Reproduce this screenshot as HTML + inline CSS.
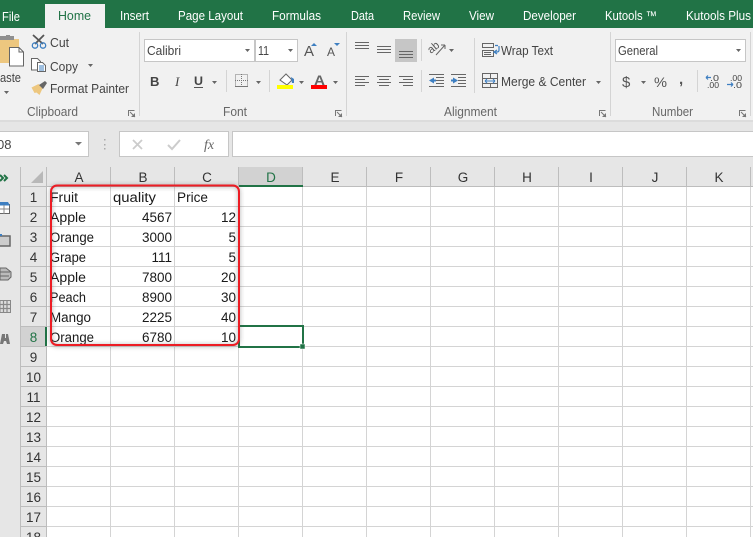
<!DOCTYPE html>
<html><head><meta charset="utf-8"><style>
html,body{margin:0;padding:0;width:753px;height:537px;overflow:hidden;background:#fff}
svg{display:block}
text{font-family:"Liberation Sans",sans-serif;font-size:12.500px;fill:#444}
.w text{fill:#fff}
.c text{font-size:13.500px;fill:#1a1a1a}
.r text{font-size:13.500px;fill:#333;text-anchor:middle}
</style></head><body>
<svg width="753" height="537" viewBox="0 0 753 537" xmlns="http://www.w3.org/2000/svg">
<defs><filter id="sh" x="-10%" y="-10%" width="120%" height="120%"><feGaussianBlur stdDeviation="2"/></filter></defs>
<!-- title tabs -->
<rect width="753" height="28" fill="#217346"/>
<rect x="45" y="4" width="60" height="24" fill="#f1f1f1"/>
<g class="w">
<text x="2" y="21" textLength="18" lengthAdjust="spacingAndGlyphs">File</text>
<text x="120" y="20" textLength="29" lengthAdjust="spacingAndGlyphs">Insert</text>
<text x="178" y="20" textLength="65" lengthAdjust="spacingAndGlyphs">Page Layout</text>
<text x="272" y="20" textLength="49" lengthAdjust="spacingAndGlyphs">Formulas</text>
<text x="351" y="20" textLength="23" lengthAdjust="spacingAndGlyphs">Data</text>
<text x="403" y="20" textLength="37" lengthAdjust="spacingAndGlyphs">Review</text>
<text x="469" y="20" textLength="25" lengthAdjust="spacingAndGlyphs">View</text>
<text x="523" y="20" textLength="53" lengthAdjust="spacingAndGlyphs">Developer</text>
<text x="605" y="20" textLength="52" lengthAdjust="spacingAndGlyphs">Kutools ™</text>
<text x="686" y="20" textLength="65" lengthAdjust="spacingAndGlyphs">Kutools Plus</text>
</g>
<text x="58" y="20" textLength="33" lengthAdjust="spacingAndGlyphs" style="fill:#217346">Home</text>
<!-- ribbon -->
<rect y="28" width="753" height="92" fill="#f1f1f1"/>
<rect y="120" width="753" height="2" fill="#dcdcdc"/>
<rect y="122" width="753" height="45" fill="#e6e6e6"/>
<g fill="#d4d4d4">
<rect x="139" y="32" width="1" height="84"/><rect x="346" y="32" width="1" height="84"/><rect x="610" y="32" width="1" height="84"/><rect x="750" y="32" width="1" height="84"/>
<rect x="226" y="70" width="1" height="22"/><rect x="269" y="70" width="1" height="22"/>
<rect x="421" y="39" width="1" height="22"/><rect x="421" y="70" width="1" height="22"/><rect x="474" y="38" width="1" height="55"/>
<rect x="697" y="70" width="1" height="22"/>
</g>
<!-- clipboard -->
<path d="M0 39h19v24H0z" fill="#edc77f"/><path d="M0 36h6v-1h4v1h4v4H0z" fill="#8f8f8f"/>
<path d="M9.500 47.500h9.500l4.500 4.500v14H9.500z" fill="#fff" stroke="#666"/><path d="M19 47.500v4.500h4.500" fill="none" stroke="#666"/>
<text x="0" y="82" textLength="21" lengthAdjust="spacingAndGlyphs">aste</text>
<path d="M4 91h5l-2.500 3z" fill="#666"/>
<path d="M33 35l10 9M44 35l-9 9" stroke="#555" stroke-width="1.800" fill="none"/>
<circle cx="35" cy="45.500" r="2.700" fill="none" stroke="#3e7fc1" stroke-width="1.300"/><circle cx="43" cy="45.500" r="2.700" fill="none" stroke="#3e7fc1" stroke-width="1.300"/>
<text x="50" y="47" textLength="19" lengthAdjust="spacingAndGlyphs">Cut</text>
<path d="M31.500 58.500h6l3 3v8.500h-9z" fill="#fff" stroke="#666"/><path d="M37.500 62.500h5l3 3v6h-8z" fill="#fff" stroke="#666"/>
<path d="M39 66h5M39 68h5M39 70h5" stroke="#3e7fc1"/>
<text x="50" y="71" textLength="28" lengthAdjust="spacingAndGlyphs">Copy</text>
<path d="M88 64h5l-2.500 3z" fill="#666"/>
<path d="M31.500 87.500l7-3.500 4 4.500-3 6.500-3-2.500-2 .5z" fill="#edc77f"/><path d="M39 85l6-4 2 2-4 6z" fill="#666"/>
<text x="50" y="93" textLength="79" lengthAdjust="spacingAndGlyphs">Format Painter</text>
<text x="27" y="116" textLength="51" lengthAdjust="spacingAndGlyphs" style="fill:#666">Clipboard</text>
<g fill="none" stroke="#777"><path d="M128.500 116v-5.500h6M130 112l5 5"/></g><path d="M135 113v4h-4z" fill="#777"/>
<!-- font -->
<rect x="144.500" y="39.500" width="110" height="22" fill="#fff" stroke="#c6c6c6"/>
<rect x="255.500" y="39.500" width="42" height="22" fill="#fff" stroke="#c6c6c6"/>
<text x="147" y="55" textLength="34" lengthAdjust="spacingAndGlyphs">Calibri</text>
<text x="258" y="55" textLength="11" lengthAdjust="spacingAndGlyphs">11</text>
<path d="M245 49h5l-2.500 3zM288 49h5l-2.500 3z" fill="#666"/>
<text x="304" y="56" style="font-size:15px;fill:#555" textLength="10" lengthAdjust="spacingAndGlyphs">A</text>
<text x="327" y="56" style="font-size:12px;fill:#555" textLength="8" lengthAdjust="spacingAndGlyphs">A</text>
<path d="M311 46l3-3 3 3z" fill="#3e7fc1"/><path d="M334 43h6l-3 3z" fill="#3e7fc1"/>
<text x="150" y="86" style="font-weight:bold;font-size:13px">B</text>
<text x="175" y="86" style="font-style:italic;font-size:13px;font-family:'Liberation Serif',serif">I</text>
<text x="194" y="85" style="font-weight:bold;font-size:12px" textLength="9" lengthAdjust="spacingAndGlyphs">U</text>
<rect x="194" y="87" width="9" height="1" fill="#555"/>
<path d="M212 81h5l-2.500 3zM256 81h5l-2.500 3zM299 81h5l-2.500 3zM333 81h5l-2.500 3z" fill="#666"/>
<g fill="none" stroke="#777" stroke-dasharray="1 1"><rect x="235.500" y="74.500" width="12" height="12"/><path d="M241.500 74v12M235 80.500h13"/></g>
<path d="M235 86.500h13" stroke="#777"/>
<path d="M280 80l6-6 6 6-5 5z" fill="#fff" stroke="#666"/><path d="M291 77l3 2v4h-2z" fill="#3e7fc1"/>
<rect x="277" y="85" width="16" height="4" fill="#ffff00"/>
<text x="314" y="85" style="font-size:14px;font-weight:bold;fill:#666" textLength="11" lengthAdjust="spacingAndGlyphs">A</text>
<rect x="311" y="85" width="16" height="4" fill="#f00"/>
<text x="223" y="116" textLength="24" lengthAdjust="spacingAndGlyphs" style="fill:#666">Font</text>
<g fill="none" stroke="#777"><path d="M335.500 116v-5.500h6M337 112l5 5"/></g><path d="M342 113v4h-4z" fill="#777"/>
<!-- alignment -->
<rect x="395" y="39" width="22" height="23" fill="#c6c6c6"/>
<g fill="#666">
<rect x="355" y="42" width="14" height="1"/><rect x="355" y="45" width="14" height="1"/><rect x="355" y="48" width="14" height="1"/>
<rect x="377" y="46" width="14" height="1"/><rect x="377" y="49" width="14" height="1"/><rect x="377" y="52" width="14" height="1"/>
<rect x="399" y="51" width="14" height="1"/><rect x="399" y="54" width="14" height="1"/><rect x="399" y="57" width="14" height="1"/>
<rect x="355" y="76" width="14" height="1"/><rect x="355" y="79" width="10" height="1"/><rect x="355" y="82" width="14" height="1"/><rect x="355" y="85" width="10" height="1"/>
<rect x="377" y="76" width="14" height="1"/><rect x="379" y="79" width="10" height="1"/><rect x="377" y="82" width="14" height="1"/><rect x="379" y="85" width="10" height="1"/>
<rect x="399" y="76" width="14" height="1"/><rect x="403" y="79" width="10" height="1"/><rect x="399" y="82" width="14" height="1"/><rect x="403" y="85" width="10" height="1"/>
<rect x="429" y="74" width="15" height="1"/><rect x="436" y="77" width="8" height="1"/><rect x="436" y="80" width="8" height="1"/><rect x="436" y="83" width="8" height="1"/><rect x="429" y="86" width="15" height="1"/>
<rect x="451" y="74" width="15" height="1"/><rect x="458" y="77" width="8" height="1"/><rect x="458" y="80" width="8" height="1"/><rect x="458" y="83" width="8" height="1"/><rect x="451" y="86" width="15" height="1"/>
<path d="M449 49h5l-2.500 3zM596 81h5l-2.500 3z"/>
</g>
<path d="M429 80.500l5-3v2h2v2h-2v2zM458 80.500l-5-3v2h-2v2h2v2z" fill="#3e7fc1"/>
<text x="431" y="54" style="font-size:11px;fill:#555" transform="rotate(-40 431 54)" textLength="12" lengthAdjust="spacingAndGlyphs">ab</text>
<path d="M436 55l9-10M445 45h-4M445 45v4" stroke="#666" fill="none"/>
<g fill="none" stroke="#666"><rect x="482.500" y="43.500" width="11" height="4"/><rect x="482.500" y="50.500" width="11" height="6"/><path d="M484 52.500h7M484 54.500h7"/></g>
<path d="M495 45.500h3M499 46v4q0 2-2 2h-2M497 50l-3 2 3 2" fill="none" stroke="#3e7fc1" stroke-width="1.200"/>
<text x="501" y="55" textLength="52" lengthAdjust="spacingAndGlyphs">Wrap Text</text>
<g fill="none" stroke="#666"><rect x="482.500" y="73.500" width="15" height="14"/><path d="M483 78.500h14M483 83.500h14M490.500 74v4M490.500 84v3"/></g>
<rect x="484" y="79" width="12" height="4" fill="#f1f1f1"/><path d="M485 81h10M485 81l2-2M485 81l2 2M495 81l-2-2M495 81l-2 2" stroke="#3e7fc1" fill="none"/>
<text x="501" y="86" textLength="85" lengthAdjust="spacingAndGlyphs">Merge &amp; Center</text>
<text x="444" y="116" textLength="53" lengthAdjust="spacingAndGlyphs" style="fill:#666">Alignment</text>
<g fill="none" stroke="#777"><path d="M599.500 116v-5.500h6M601 112l5 5"/></g><path d="M606 113v4h-4z" fill="#777"/>
<!-- number -->
<rect x="615.500" y="39.500" width="130" height="22" fill="#fff" stroke="#c6c6c6"/>
<text x="618" y="55" textLength="40" lengthAdjust="spacingAndGlyphs">General</text>
<path d="M736 49h5l-2.500 3zM641 81h5l-2.500 3z" fill="#666"/>
<text x="622" y="87" style="font-size:15px;fill:#555">$</text>
<text x="654" y="87" style="font-size:14px;fill:#555" textLength="13" lengthAdjust="spacingAndGlyphs">%</text>
<text x="679" y="84" style="font-size:15px;font-weight:bold;fill:#555">,</text>
<text x="710" y="81" style="font-size:8px" textLength="9" lengthAdjust="spacingAndGlyphs">.0</text>
<text x="707" y="88" style="font-size:8px" textLength="12" lengthAdjust="spacingAndGlyphs">.00</text>
<text x="730" y="81" style="font-size:8px" textLength="12" lengthAdjust="spacingAndGlyphs">.00</text>
<text x="733" y="88" style="font-size:8px" textLength="9" lengthAdjust="spacingAndGlyphs">.0</text>
<path d="M706 77.500h5M706 77.500l2-2M706 77.500l2 2M727 84.500h6M733 84.500l-2-2M733 84.500l-2 2" stroke="#3e7fc1" stroke-width="1.200" fill="none"/>
<text x="652" y="116" textLength="41" lengthAdjust="spacingAndGlyphs" style="fill:#666">Number</text>
<g fill="none" stroke="#777"><path d="M739.500 116v-5.500h6M741 112l5 5"/></g><path d="M746 113v4h-4z" fill="#777"/>
<!-- formula bar -->
<rect x="-2" y="131.500" width="90.500" height="25" fill="#fff" stroke="#c6c6c6"/>
<text x="-3" y="149" style="font-size:13px">08</text>
<path d="M75 142h7l-3.500 3.500z" fill="#777"/>
<path d="M104 139h1.500v1.500H104zM104 144h1.500v1.500H104zM104 148h1.500v1.500H104z" fill="#aaa"/>
<rect x="119.500" y="131.500" width="109" height="25" fill="#fff" stroke="#c6c6c6"/>
<path d="M133 140l9 9M142 140l-9 9" stroke="#ccc" stroke-width="1.800"/>
<path d="M168 145l4 4 8-9" stroke="#ccc" stroke-width="2" fill="none"/>
<text x="204" y="149" style="font-family:'Liberation Serif',serif;font-style:italic;font-size:14px;fill:#666">fx</text>
<rect x="232.500" y="131.500" width="525" height="25" fill="#fff" stroke="#c6c6c6"/>
<!-- sheet chrome -->
<rect y="157" width="753" height="10" fill="#e6e6e6"/>
<rect y="167" width="20" height="370" fill="#e6e6e6"/>
<rect x="20" y="167" width="733" height="20" fill="#e6e6e6"/>
<rect x="20" y="187" width="27" height="350" fill="#e6e6e6"/>
<rect x="239" y="167" width="64" height="20" fill="#d2d2d2"/>
<rect x="21" y="327" width="25" height="19" fill="#d2d2d2"/>
<!-- grid -->
<g fill="#d4d4d4">
<rect x="110" y="187" width="1" height="350"/><rect x="174" y="187" width="1" height="350"/><rect x="238" y="187" width="1" height="350"/><rect x="302" y="187" width="1" height="350"/><rect x="366" y="187" width="1" height="350"/><rect x="430" y="187" width="1" height="350"/><rect x="494" y="187" width="1" height="350"/><rect x="558" y="187" width="1" height="350"/><rect x="622" y="187" width="1" height="350"/><rect x="686" y="187" width="1" height="350"/><rect x="750" y="187" width="1" height="350"/>
<rect x="47" y="206" width="706" height="1"/><rect x="47" y="226" width="706" height="1"/><rect x="47" y="246" width="706" height="1"/><rect x="47" y="266" width="706" height="1"/><rect x="47" y="286" width="706" height="1"/><rect x="47" y="306" width="706" height="1"/><rect x="47" y="326" width="706" height="1"/><rect x="47" y="346" width="706" height="1"/><rect x="47" y="366" width="706" height="1"/><rect x="47" y="386" width="706" height="1"/><rect x="47" y="406" width="706" height="1"/><rect x="47" y="426" width="706" height="1"/><rect x="47" y="446" width="706" height="1"/><rect x="47" y="466" width="706" height="1"/><rect x="47" y="486" width="706" height="1"/><rect x="47" y="506" width="706" height="1"/><rect x="47" y="526" width="706" height="1"/>
</g>
<g fill="#bdbdbd">
<rect x="20" y="167" width="1" height="370"/><rect x="46" y="167" width="1" height="370"/>
<rect x="20" y="186" width="733" height="1"/>
<rect x="110" y="167" width="1" height="19"/><rect x="174" y="167" width="1" height="19"/><rect x="238" y="167" width="1" height="19"/><rect x="302" y="167" width="1" height="19"/><rect x="366" y="167" width="1" height="19"/><rect x="430" y="167" width="1" height="19"/><rect x="494" y="167" width="1" height="19"/><rect x="558" y="167" width="1" height="19"/><rect x="622" y="167" width="1" height="19"/><rect x="686" y="167" width="1" height="19"/><rect x="750" y="167" width="1" height="19"/>
<rect x="21" y="206" width="25" height="1"/><rect x="21" y="226" width="25" height="1"/><rect x="21" y="246" width="25" height="1"/><rect x="21" y="266" width="25" height="1"/><rect x="21" y="286" width="25" height="1"/><rect x="21" y="306" width="25" height="1"/><rect x="21" y="326" width="25" height="1"/><rect x="21" y="346" width="25" height="1"/><rect x="21" y="366" width="25" height="1"/><rect x="21" y="386" width="25" height="1"/><rect x="21" y="406" width="25" height="1"/><rect x="21" y="426" width="25" height="1"/><rect x="21" y="446" width="25" height="1"/><rect x="21" y="466" width="25" height="1"/><rect x="21" y="486" width="25" height="1"/><rect x="21" y="506" width="25" height="1"/><rect x="21" y="526" width="25" height="1"/>
</g>
<path d="M31 183L43 171v12z" fill="#b8b8b8"/>
<rect x="239" y="185" width="64" height="2" fill="#217346"/>
<rect x="45" y="327" width="2" height="19" fill="#217346"/>
<!-- headers -->
<g class="r">
<text x="79" y="182">A</text><text x="143" y="182">B</text><text x="207" y="182">C</text><text x="271" y="182" style="fill:#217346">D</text><text x="335" y="182">E</text><text x="399" y="182">F</text><text x="463" y="182">G</text><text x="527" y="182">H</text><text x="591" y="182">I</text><text x="655" y="182">J</text><text x="719" y="182">K</text>
<text x="33.500" y="202">1</text><text x="33.500" y="222">2</text><text x="33.500" y="242">3</text><text x="33.500" y="262">4</text><text x="33.500" y="282">5</text><text x="33.500" y="302">6</text><text x="33.500" y="322">7</text><text x="33.500" y="342" style="fill:#217346">8</text><text x="33.500" y="362">9</text><text x="33.500" y="382">10</text><text x="33.500" y="402">11</text><text x="33.500" y="422">12</text><text x="33.500" y="442">13</text><text x="33.500" y="462">14</text><text x="33.500" y="482">15</text><text x="33.500" y="502">16</text><text x="33.500" y="522">17</text><text x="33.500" y="542">18</text>
</g>
<!-- cells -->
<g class="c">
<text x="50" y="202" textLength="28" lengthAdjust="spacingAndGlyphs">Fruit</text>
<text x="113" y="202" textLength="43" lengthAdjust="spacingAndGlyphs">quality</text>
<text x="177" y="202" textLength="31" lengthAdjust="spacingAndGlyphs">Price</text>
<text x="50" y="222" textLength="36" lengthAdjust="spacingAndGlyphs">Apple</text>
<text x="50" y="242" textLength="44" lengthAdjust="spacingAndGlyphs">Orange</text>
<text x="50" y="262" textLength="36" lengthAdjust="spacingAndGlyphs">Grape</text>
<text x="50" y="282" textLength="36" lengthAdjust="spacingAndGlyphs">Apple</text>
<text x="50" y="302" textLength="36" lengthAdjust="spacingAndGlyphs">Peach</text>
<text x="50" y="322" textLength="41" lengthAdjust="spacingAndGlyphs">Mango</text>
<text x="50" y="342" textLength="44" lengthAdjust="spacingAndGlyphs">Orange</text>
</g>
<g class="c" style="text-anchor:end">
<text x="172" y="222">4567</text><text x="172" y="242">3000</text><text x="172" y="262">111</text><text x="172" y="282">7800</text><text x="172" y="302">8900</text><text x="172" y="322">2225</text><text x="172" y="342">6780</text>
<text x="236" y="222">12</text><text x="236" y="242">5</text><text x="236" y="262">5</text><text x="236" y="282">20</text><text x="236" y="302">30</text><text x="236" y="322">40</text><text x="236" y="342">10</text>
</g>
<!-- selection -->
<rect x="239" y="326" width="64" height="21" fill="none" stroke="#217346" stroke-width="2"/>
<rect x="300" y="344" width="5" height="5" fill="#217346" stroke="#fff" stroke-width="0.500"/>
<!-- red box -->
<rect x="51" y="186" width="188" height="159.500" rx="6" fill="none" stroke="#444" stroke-opacity=".55" stroke-width="2" filter="url(#sh)"/>
<rect x="51" y="185.500" width="188" height="159.500" rx="6" fill="none" stroke="#ed1c24" stroke-width="2"/>
<!-- sidebar icons -->
<path d="M0 175l3 3-3 3M4 175l3 3-3 3" fill="none" stroke="#217346" stroke-width="2"/>
<rect x="-1" y="204.500" width="10.500" height="9" fill="#fff" stroke="#666"/><path d="M0 202h8l2 3.500H0z" fill="#3e7fc1"/><path d="M0 209h9M4 205v9" stroke="#888"/>
<rect x="-1" y="236" width="11" height="10" fill="#ccc" stroke="#666" stroke-width="1.500"/><rect x="0" y="234" width="2" height="2" fill="#3e7fc1"/>
<path d="M0 268h6l5 4v5l-3 3H0z" fill="#bbb" stroke="#666"/><path d="M0 272h10M0 276h9" stroke="#666"/>
<rect x="0" y="300.500" width="10.500" height="12" fill="#ddd" stroke="#888"/><path d="M3.500 301v12M7 301v12M0 304.500h10M0 308.500h10" stroke="#888" stroke-width="1.200"/>
<path d="M0 344l2-10h3v4h1v-4h2l2 10H7l-1-3H4l-1 3z" fill="#777"/>
</svg>
</body></html>
